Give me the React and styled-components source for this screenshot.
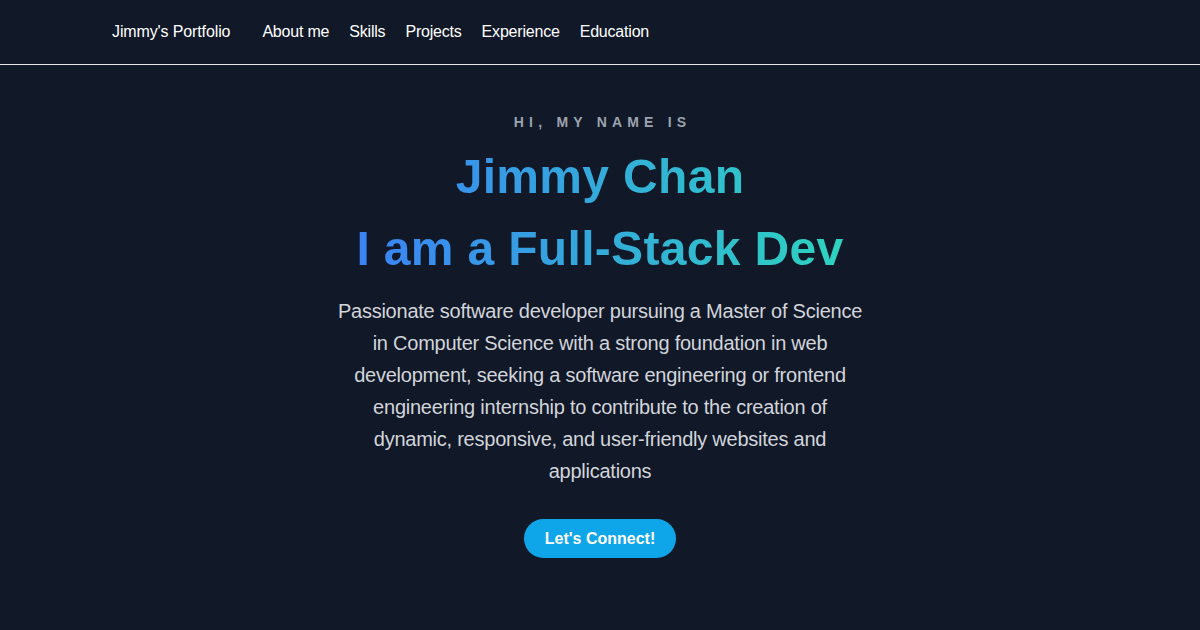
import React from "react";
import styled, { createGlobalStyle } from "styled-components";

const GlobalStyle = createGlobalStyle`
	* {
		box-sizing: border-box;
	}
	body {
		margin: 0;
		background-color: #111827;
		font-family: "Liberation Sans", Arial, sans-serif;
	}
`;

const links = ["About me", "Skills", "Projects", "Experience", "Education"];

function App() {
	return (
		<Page>
			<GlobalStyle />
			<Navbar>
				<Brand>Jimmy's Portfolio</Brand>
				<NavLinks>
					{links.map((link) => (
						<NavLink key={link}>{link}</NavLink>
					))}
				</NavLinks>
			</Navbar>
			<Hero>
				<Greeting>Hi, my name is</Greeting>
				<Title>
					Jimmy Chan
					<br />I am a Full-Stack Dev
				</Title>
				<Intro>
					Passionate software developer pursuing a Master of Science in
					Computer Science with a strong foundation in web development, seeking
					a software engineering or frontend engineering internship to
					contribute to the creation of dynamic, responsive, and user-friendly
					websites and applications
				</Intro>
				<ConnectButton>Let's Connect!</ConnectButton>
			</Hero>
		</Page>
	);
}

export default App;

const Page = styled.div`
	min-height: 630px;
	background-color: #111827;
`;

const Navbar = styled.nav`
	display: flex;
	align-items: center;
	gap: 32px;
	height: 65px;
	padding: 0 112px;
	border-bottom: 1px solid #e5e7eb;
`;

const Brand = styled.span`
	color: #ffffff;
	font-size: 16px;
	letter-spacing: -0.12px;
`;

const NavLinks = styled.div`
	display: flex;
	gap: 20px;
`;

const NavLink = styled.a`
	color: #ffffff;
	font-size: 16px;
	letter-spacing: -0.2px;
	cursor: pointer;
`;

const Hero = styled.section`
	display: flex;
	flex-direction: column;
	align-items: center;
	padding-top: 47px;
	text-align: center;
`;

const Greeting = styled.span`
	color: #9ca3af;
	font-size: 14px;
	line-height: 20px;
	font-weight: bold;
	text-transform: uppercase;
	letter-spacing: 5.2px;
	margin-right: -5.2px;
`;

const Title = styled.h1`
	display: inline-block;
	margin: 9px 0 0;
	font-size: 48px;
	line-height: 72px;
	font-weight: bold;
	letter-spacing: 0.33px;
	background-image: linear-gradient(to right, #3b82f6, #2dd4bf);
	-webkit-background-clip: text;
	background-clip: text;
	color: transparent;
`;

const Intro = styled.p`
	max-width: 530px;
	margin: 10px 0 0;
	color: #d1d5db;
	font-size: 20px;
	line-height: 32px;
	letter-spacing: -0.24px;
`;

const ConnectButton = styled.button`
	margin-top: 32px;
	padding: 0 21px;
	height: 39px;
	border: none;
	border-radius: 9999px;
	background-color: #0ea5e9;
	color: #ffffff;
	font-family: inherit;
	font-size: 16px;
	font-weight: bold;
	cursor: pointer;
`;
